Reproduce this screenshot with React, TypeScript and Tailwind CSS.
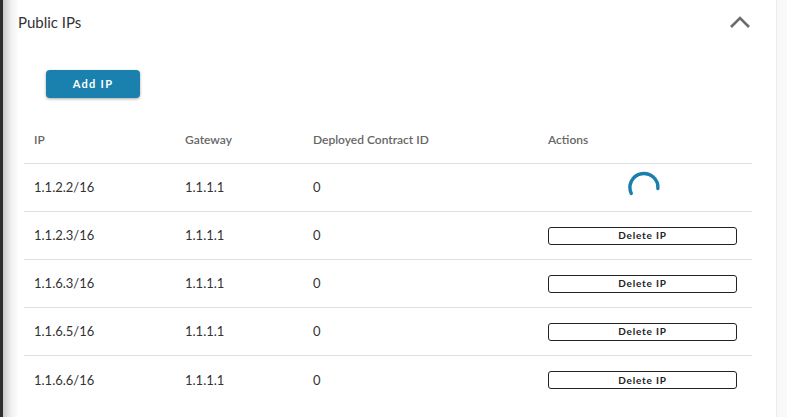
import React from 'react';

const rows = [
  { ip: '1.1.2.2/16', gateway: '1.1.1.1', contract: '0', loading: true },
  { ip: '1.1.2.3/16', gateway: '1.1.1.1', contract: '0', loading: false },
  { ip: '1.1.6.3/16', gateway: '1.1.1.1', contract: '0', loading: false },
  { ip: '1.1.6.5/16', gateway: '1.1.1.1', contract: '0', loading: false },
  { ip: '1.1.6.6/16', gateway: '1.1.1.1', contract: '0', loading: false },
];

function Spinner() {
  return (
    <svg width="36" height="36" viewBox="0 0 36 36" className="block">
      {/* arc from lower-left over the top to the right */}
      <path
        d="M5.3 24.5 A14 14 0 1 1 31.9 19.5"
        fill="none"
        stroke="#1b7fae"
        strokeWidth="3.4"
        strokeLinecap="round"
      />
    </svg>
  );
}

export default function App() {
  return (
    <div
      className="flex h-[417px] w-[787px] overflow-hidden bg-[#f9f9f9]"
      style={{ fontFamily: 'Lato, "Open Sans", sans-serif' }}
    >
      {/* dark sidebar edge */}
      <div className="w-[3px] shrink-0 bg-[#2e2e2e]" />

      {/* card */}
      <div className="relative w-[774px] shrink-0 border-r border-[#ececec] bg-[linear-gradient(to_right,#c9c9c9_0px,#f0f0f0_8px,#ffffff_16px)]">
        <div className="flex h-[44px] items-center justify-between pl-[15px] pr-[25px]">
          <span className="text-[15px] text-[#333]">Public IPs</span>
          <svg width="22" height="14" viewBox="0 0 22 14">
            <path d="M2 12 L11 3 L20 12" fill="none" stroke="#6b6b6b" strokeWidth="2.6" />
          </svg>
        </div>

        <div className="pl-[43px] pt-[26px]">
          <button className="h-[28px] w-[94px] rounded-[4px] bg-[#1a80ad] text-[11px] font-bold tracking-[0.12em] text-white shadow-[0_1px_3px_rgba(0,0,0,0.35)]">
            Add IP
          </button>
        </div>

        <div className="ml-[21px] mr-[24px] mt-[18px]">
          <div className="flex h-[48px] items-center border-b border-[#e0e0e0] text-[12px] font-semibold text-[#666]">
            <div className="w-[161px] pl-[10px]">IP</div>
            <div className="w-[128px]">Gateway</div>
            <div className="w-[235px]">Deployed Contract ID</div>
            <div>Actions</div>
          </div>
          {rows.map((r, i) => (
            <div
              key={r.ip}
              className={`flex h-[48px] items-center text-[13px] text-[#333] ${
                i < rows.length - 1 ? 'border-b border-[#e0e0e0]' : ''
              }`}
            >
              <div className="w-[161px] pl-[10px]">{r.ip}</div>
              <div className="w-[128px]">{r.gateway}</div>
              <div className="w-[235px]">{r.contract}</div>
              <div className="flex w-[189px] justify-center">
                {r.loading ? (
                  <div className="pb-[2px] pl-[2px]">
                    <Spinner />
                  </div>
                ) : (
                  <button className="h-[18px] w-[189px] rounded-[3px] border border-[#222] bg-white text-[10px] font-bold tracking-[0.08em] text-[#222]">
                    Delete IP
                  </button>
                )}
              </div>
            </div>
          ))}
        </div>
      </div>
    </div>
  );
}
